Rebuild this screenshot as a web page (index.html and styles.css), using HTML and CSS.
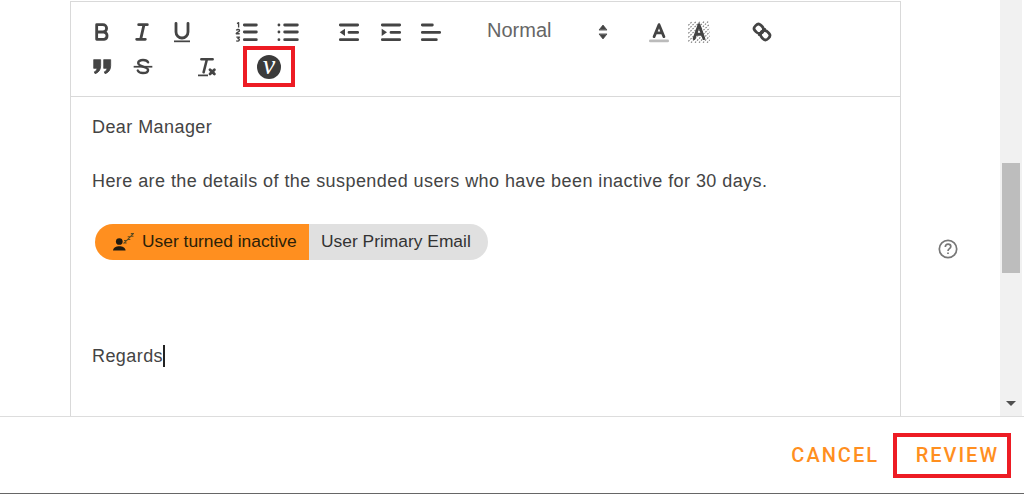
FILE: index.html
```html
<!DOCTYPE html>
<html lang="en">
<head>
<meta charset="utf-8">
<title>Email template</title>
<link rel="stylesheet" href="styles.css">
</head>
<body>
<div class="page">
  <main class="main">
    <section class="editor">
      <div class="toolbar">
        <div class="row">
          <button class="tool"><svg class="ico" viewBox="0 0 18 18"><path d="M5 3.500h4.700a2.700 2.700 0 0 1 0 5.500H5zM5 9h5.500a2.800 2.800 0 0 1 0 5.500H5z"/></svg></button>
          <button class="tool"><svg class="ico" viewBox="0 0 18 18"><path d="M6.500 3.500h6.500M5 14.500h6.500M8 14.500l2.500-11"/></svg></button>
          <button class="tool"><svg class="ico" viewBox="0 0 18 18"><path d="M4.500 2.500v6.500a4.500 4.500 0 0 0 9 0V2.500"/><path class="thin" d="M3 16h12"/></svg></button>
          <button class="tool gap-25"><svg class="ico" viewBox="0 0 18 18"><path d="M7 3.750h9M7 9h9M7 14.750h9"/><path class="hair" d="M1.500 2.700l1.200-.7v3.700M.9 7.800c1-1.100 2.500-.7 2.500.2 0 1-2.300 1.200-2.500 2.300h2.600M1 12.800h2.400l-1.200 1.100c1.600 0 1.600 2.300-1.300 1.800"/></svg></button>
          <button class="tool gap-1"><svg class="ico" viewBox="0 0 18 18"><path d="M6.500 3.750h9.500M6.500 9h9.500M6.500 14.750h9.500M2.200 3.750h.01M2.200 9h.01M2.200 14.750h.01"/></svg></button>
          <button class="tool gap-21"><svg class="ico" viewBox="0 0 18 18"><path d="M2.500 14.750h13M2.500 3.750h13M9 9.300h6.500"/><path class="solid" d="M6 6.500v5.500L2 9.250z"/></svg></button>
          <button class="tool gap-2"><svg class="ico" viewBox="0 0 18 18"><path d="M2.500 14.750h13M2.500 3.750h13M9 9.300h6.500"/><path class="solid" d="M2 6.500v5.500l4-2.750z"/></svg></button>
          <button class="tool"><svg class="ico" viewBox="0 0 18 18"><path d="M2.500 9.300h13M2.500 14.750h10.500M2.500 3.750h7.500"/></svg></button>
          <span class="picker-label">Normal</span>
          <button class="tool gap-31"><svg class="ico" viewBox="0 0 18 18"><path class="solid-round" d="M6.200 7.300L9 3.800l2.800 3.500zM6.200 10.700L9 14.200l2.800-3.500z"/></svg></button>
          <button class="tool gap-16"><svg class="ico" viewBox="0 0 18 18"><path d="M5.300 12.500L9 3.500l3.700 9M6.500 9.700h5"/><path class="tint" d="M2.500 15.700h13"/></svg></button>
          <button class="tool"><svg class="ico" viewBox="0 0 18 18"><path class="hatch" d="M1 4l3-3M1 7l6-6M1 10l9-9M1 13L13 1M1 16L16 1M3 17L17 3M6 17L17 6M9 17l8-8M12 17l5-5M15 17l2-2"/><path d="M5.300 14l3.700-10.500 3.700 10.500M6.500 10.700h5"/></svg></button>
          <button class="tool gap-23"><svg class="ico" viewBox="0 0 18 18"><path d="M7 11l4-4"/><path d="M8.900 4.580a3.480 3.480 0 0 1 .36 4.680 3.480 3.480 0 0 1-4.680-.36C3.190 7.500 2.040 6.400 4.220 4.220S7.500 3.190 8.900 4.580z"/><path d="M13.420 9.100a3.480 3.480 0 0 0-4.680-.36 3.480 3.480 0 0 0 .36 4.680c1.400 1.390 2.500 2.540 4.680.36S14.820 10.500 13.420 9.100z"/></svg></button>
        </div>
        <div class="row">
          <button class="tool"><svg class="ico" viewBox="0 0 18 18"><path class="solid-round" d="M3 3.500h5v4.500c0 3-1.500 5.300-4.200 6l-.6-1.300c1.200-.5 1.900-1.500 2-2.700H3zM10.500 3.500h5v4.500c0 3-1.500 5.300-4.200 6l-.6-1.300c1.200-.5 1.900-1.500 2-2.700h-2.200z"/></svg></button>
          <button class="tool gap-1"><svg class="ico" viewBox="0 0 18 18"><path class="thin" d="M2 8.800h14"/><path class="mid" d="M12.800 5.500C12.300 4.400 10.900 3.800 9 3.800 6.900 3.800 5.400 4.700 5.400 6c0 1.400 1.600 2 3.600 2.700s3.800 1.200 3.800 2.500c0 1.400-1.700 2.300-3.800 2.300-1.900 0-3.400-.6-3.900-1.800"/></svg></button>
          <button class="tool gap-23"><svg class="ico" viewBox="0 0 18 18"><path class="bar" d="M5.500 3.200h8.500M9.700 3.200L7.200 13"/><path class="thin" d="M3 15.300h7.500"/><path d="M12 11l3.300 3.300M15.300 11L12 14.300"/></svg></button>
          <div class="highlight">
            <span class="v-logo">v</span>
          </div>
        </div>
      </div>
      <div class="body">
        <p class="line">Dear Manager</p>
        <p class="line details">Here are the details of the suspended users who have been inactive for 30 days.</p>
        <div class="token">
          <span class="token-event">
            <svg class="sleep" viewBox="0 0 20 18"><circle cx="6" cy="9" r="3.200"/><path d="M0 17.500c.5-3 3-4 6-4s5.500 1 6 4z"/><path class="zzz" d="M10.500 8h2.500l-2.500 2.500h2.500M14 4.500h2.500L14 7h2.500M17 1.500h2.500L17 4h2.500"/></svg>
            User turned inactive
          </span>
          <span class="token-field">User Primary Email</span>
        </div>
        <p class="line regards">Regards<span class="caret"></span></p>
      </div>
    </section>
    <aside class="help">
      <svg class="help-ico" viewBox="0 0 20 20"><circle cx="10" cy="10" r="8.700"/><path d="M7.300 8c0-1.700 1.100-2.800 2.800-2.800s2.700 1 2.700 2.400c0 2.100-2.800 2.100-2.800 4.400"/><path d="M10 13.400v1.600"/></svg>
    </aside>
    <div class="scrollbar">
      <div class="thumb"></div>
      <div class="arrow"></div>
    </div>
  </main>
  <footer class="footer">
    <button class="action">CANCEL</button>
    <div class="review-box"><button class="action">REVIEW</button></div>
  </footer>
</div>
</body>
</html>
```

FILE: styles.css
```css
* { box-sizing: border-box; }
html, body { margin: 0; height: 100%; }
body { background: #fff; font-family: "Liberation Sans", Arial, sans-serif; overflow: hidden; }
.page { width: 1024px; height: 494px; display: flex; flex-direction: column; border-bottom: 1px solid #666; }

.main { height: 416px; display: flex; flex: none; overflow: hidden; }
.editor { width: 831px; margin: 1px 0 0 70px; height: 430px; border: 1px solid #d9d9d9; flex: none; }
.toolbar { height: 95px; border-bottom: 1px solid #d9d9d9; padding: 12px 0 0 11px; display: flex; flex-direction: column; }
.row { display: flex; align-items: center; height: 35px; }
.tool { width: 40px; height: 34px; padding: 0; border: 0; background: none; display: flex; align-items: center; justify-content: center; flex: none; }
.ico { width: 24px; height: 24px; fill: none; stroke: #444; stroke-width: 2.100; stroke-linecap: round; stroke-linejoin: round; }
.ico .thin { stroke-width: 1.300; stroke-linecap: butt; }
.ico .mid { stroke-width: 1.800; }
.ico .bar { stroke-width: 1.900; }
.ico .hair { stroke-width: 1; stroke-linecap: butt; }
.ico .solid { fill: #444; stroke: none; }
.ico .solid-round { fill: #444; stroke: #444; stroke-width: .6; }
.ico .tint { stroke: #bbb; stroke-width: 2; }
.ico .hatch { stroke: #777; stroke-width: .8; stroke-dasharray: 1.200 1; stroke-linecap: butt; }
.gap-1 { margin-left: 1px; }
.gap-2 { margin-left: 2px; }
.gap-16 { margin-left: 16px; }
.gap-21 { margin-left: 21px; }
.gap-23 { margin-left: 23px; }
.gap-25 { margin-left: 25px; }
.gap-31 { margin-left: 31px; }
.picker-label { width: 65px; margin: 0 0 2px 36px; font-size: 20px; color: #666; flex: none; }
.highlight { width: 52px; height: 41px; margin-left: 17px; border: 4px solid #ed1c24; display: flex; align-items: center; justify-content: center; flex: none; }
.v-logo { width: 24px; height: 24px; border-radius: 50%; background: #3b3b3b; color: #fff; font: italic 400 28px/19px "Liberation Serif", serif; text-align: center; }

.body { padding: 18px 21px 0; color: #444; font-size: 18px; }
.line { margin: 0; line-height: 24px; letter-spacing: .43px; }
.details { margin-top: 30px; }
.token { display: inline-flex; margin: 31px 0 0 3px; height: 36px; border-radius: 18px; overflow: hidden; font-size: 17.400px; color: #333; vertical-align: top; }
.token-event { width: 214px; background: #ff8f1f; padding: 0 0 2px 18px; display: flex; align-items: center; gap: 8px; color: #2b2108; }
.sleep { width: 21px; height: 19px; flex: none; fill: #1f1a10; }
.sleep .zzz { fill: none; stroke: #5a4a20; stroke-width: 1; }
.token-field { width: 179px; background: #e0e0e0; padding-left: 12px; line-height: 34px; }
.regards { margin-top: 84px; display: flex; align-items: center; }
.caret { width: 2px; height: 22px; background: #222; margin-left: 0; }

.help { width: 99px; flex: none; padding: 239px 0 0 37px; }
.help-ico { display: block; width: 20px; height: 20px; fill: none; stroke: #777; stroke-width: 1.700; }

.scrollbar { width: 22px; background: #f1f1f1; position: relative; flex: none; }
.thumb { position: absolute; left: 2px; top: 163px; width: 18px; height: 110px; background: #bdbdbd; }
.arrow { position: absolute; left: 6px; top: 401px; width: 0; height: 0; border: 5px solid transparent; border-top: 5px solid #505050; border-bottom: 0; }

.footer { flex: 1; border-top: 1px solid #ddd; display: flex; align-items: center; justify-content: flex-end; padding: 0 13px 0 0; }
.action { padding: 0; border: 0; background: none; font: 500 20px/24px Roboto, sans-serif; letter-spacing: 2px; color: #ff8f1f; }
.review-box { width: 118px; height: 45px; border: 4px solid #ed1c24; margin-left: 14px; display: flex; align-items: center; justify-content: flex-end; padding-right: 8px; }
```
